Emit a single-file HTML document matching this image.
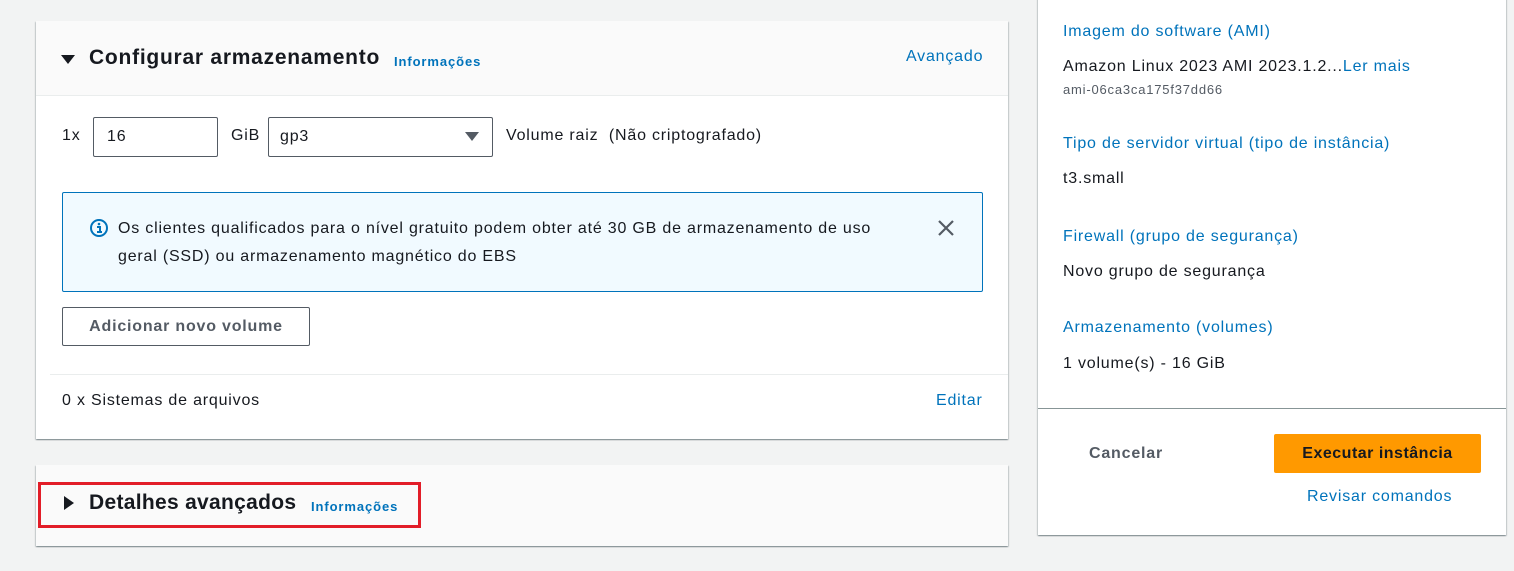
<!DOCTYPE html>
<html><head><meta charset="utf-8"><style>
*{box-sizing:border-box;margin:0;padding:0}
body{width:1514px;height:571px;background:#f2f3f3;font-family:"Liberation Sans",Arial,sans-serif;color:#16191f;position:relative;overflow:hidden;font-size:16px;letter-spacing:0.8px}
.a{position:absolute;white-space:nowrap}
.card{position:absolute;background:#fff;box-shadow:0 1px 1px rgba(0,28,36,.3),1px 1px 1px rgba(0,28,36,.15),-1px 1px 1px rgba(0,28,36,.15)}
.link{color:#0073bb}
.h{font-weight:bold;font-size:21px;letter-spacing:0.75px}
.info{color:#0073bb;font-weight:bold;font-size:13px;letter-spacing:0.9px}
</style></head><body>
<div class="card" style="left:36px;top:21px;width:972px;height:418px">
  <div style="position:absolute;left:0;top:0;right:0;height:75px;background:#fafafa;border-bottom:1px solid #eaeded"></div>
</div>
<div class="a" style="left:61px;top:55px;width:0;height:0;border-left:7px solid transparent;border-right:7px solid transparent;border-top:9px solid #16191f"></div>
<div class="a h" style="left:89px;top:46px">Configurar armazenamento</div>
<div class="a info" style="left:394px;top:54px">Informações</div>
<div class="a link" style="left:906px;top:48px">Avançado</div>

<div class="a" style="left:62px;top:127px">1x</div>
<div class="a" style="left:93px;top:117px;width:125px;height:40px;border:1px solid #545b64;border-radius:2px;padding:10px 0 0 13px">16</div>
<div class="a" style="left:231px;top:127px">GiB</div>
<div class="a" style="left:268px;top:117px;width:225px;height:40px;border:1px solid #545b64;border-radius:2px;padding:10px 0 0 11px">gp3</div>
<div class="a" style="left:465px;top:132px;width:0;height:0;border-left:7px solid transparent;border-right:7px solid transparent;border-top:9px solid #545b64"></div>
<div class="a" style="left:506px;top:127px">Volume raiz&nbsp; (Não criptografado)</div>

<div class="a" style="left:62px;top:192px;width:921px;height:100px;background:#f1faff;border:1px solid #0073bb;border-radius:2px"></div>
<svg class="a" style="left:89px;top:218px" width="20" height="20" viewBox="0 0 20 20"><circle cx="10" cy="10" r="8" fill="none" stroke="#0073bb" stroke-width="2"/><circle cx="10" cy="6" r="1.3" fill="#0073bb"/><path d="M8 9h3v5M8 14h5" stroke="#0073bb" stroke-width="2" fill="none"/></svg>
<div class="a" style="left:118px;top:215px;line-height:28px">Os clientes qualificados para o nível gratuito podem obter até 30 GB de armazenamento de uso<br>geral (SSD) ou armazenamento magnético do EBS</div>
<svg class="a" style="left:937px;top:219px" width="18" height="18" viewBox="0 0 18 18"><path d="M2 2L16 16M16 2L2 16" stroke="#545b64" stroke-width="2.2"/></svg>

<div class="a" style="left:62px;top:307px;width:248px;height:39px;border:1px solid #545b64;border-radius:2px;text-align:center;padding-top:10px;font-weight:bold;color:#545b64">Adicionar novo volume</div>
<div class="a" style="left:50px;top:374px;width:958px;border-top:1px solid #eaeded"></div>
<div class="a" style="left:62px;top:392px">0 x Sistemas de arquivos</div>
<div class="a link" style="left:936px;top:392px">Editar</div>

<div class="card" style="left:36px;top:465px;width:972px;height:81px;background:#fafafa"></div>
<div class="a" style="left:38px;top:482px;width:383px;height:46px;border:3px solid #e21d28"></div>
<div class="a" style="left:64px;top:496px;width:0;height:0;border-top:7px solid transparent;border-bottom:7px solid transparent;border-left:10px solid #16191f"></div>
<div class="a h" style="left:89px;top:491px;letter-spacing:0.3px">Detalhes avançados</div>
<div class="a info" style="left:311px;top:499px">Informações</div>

<div class="card" style="left:1038px;top:-10px;width:468px;height:545px">
  <div style="position:absolute;left:0;right:0;top:418px;border-top:1px solid #879596"></div>
</div>
<div class="a link" style="left:1063px;top:23px">Imagem do software (AMI)</div>
<div class="a" style="left:1063px;top:58px">Amazon Linux 2023 AMI 2023.1.2...<span class="link">Ler mais</span></div>
<div class="a" style="left:1063px;top:82px;font-size:13px;color:#545b64">ami-06ca3ca175f37dd66</div>
<div class="a link" style="left:1063px;top:135px">Tipo de servidor virtual (tipo de instância)</div>
<div class="a" style="left:1063px;top:170px">t3.small</div>
<div class="a link" style="left:1063px;top:228px">Firewall (grupo de segurança)</div>
<div class="a" style="left:1063px;top:263px">Novo grupo de segurança</div>
<div class="a link" style="left:1063px;top:319px">Armazenamento (volumes)</div>
<div class="a" style="left:1063px;top:355px">1 volume(s) - 16 GiB</div>
<div class="a" style="left:1089px;top:445px;font-weight:bold;color:#545b64">Cancelar</div>
<div class="a" style="left:1274px;top:434px;width:207px;height:39px;background:#ff9900;border-radius:2px;text-align:center;padding-top:11px;font-weight:bold;color:#16191f;letter-spacing:0.5px">Executar instância</div>
<div class="a link" style="left:1307px;top:488px">Revisar comandos</div>
</body></html>
